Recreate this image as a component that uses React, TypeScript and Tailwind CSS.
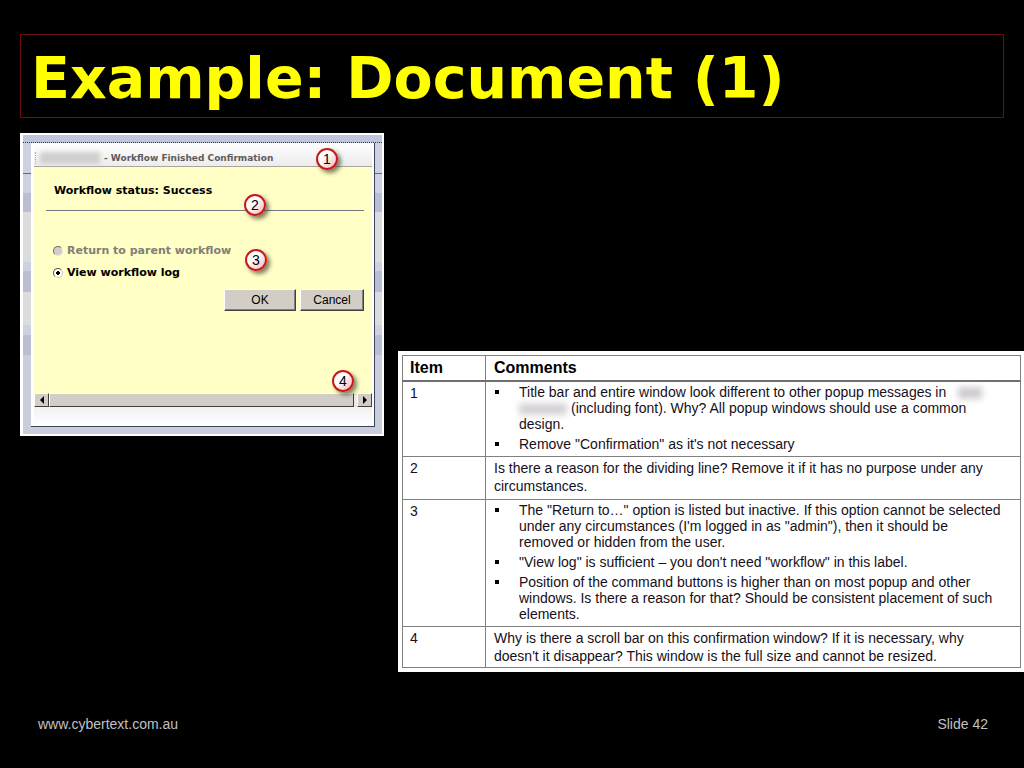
import type { ReactNode } from "react";

function Badge({ n, className }: { n: number; className: string }) {
  return (
    <span
      className={`absolute flex h-[22px] w-[22px] items-center justify-center rounded-full border-2 border-[#c8181c] bg-linear-to-br from-white from-40% to-[#f3b4b4] text-[14px] leading-none text-black shadow-[3px_3px_4px_rgba(60,60,40,0.65)] ${className}`}
    >
      {n}
    </span>
  );
}

function DialogButton({ children, className }: { children: ReactNode; className: string }) {
  return (
    <button
      type="button"
      className={`h-[22px] border border-t-white border-l-white border-r-[#404040] border-b-[#404040] bg-[#d2cec6] text-[12px] leading-4 text-black shadow-[inset_-1px_-1px_0_#808080] ${className}`}
    >
      {children}
    </button>
  );
}

function ScrollArrow({ label, points }: { label: string; points: string }) {
  return (
    <button
      type="button"
      aria-label={label}
      className="flex h-[14px] w-[15px] items-center justify-center border border-t-white border-l-white border-r-[#404040] border-b-[#404040] bg-[#d2cec6]"
    >
      <svg width="8" height="8" viewBox="0 0 8 8">
        <polygon points={points} fill="#000" />
      </svg>
    </button>
  );
}

function WorkflowDialog() {
  return (
    <div className="relative w-[364px] shrink-0 border-2 border-l-[3px] border-white bg-[#c6cadb] font-['Liberation_Sans',Arial,sans-serif]">
      <div className="h-[7px] bg-[#bec6dc]" />
      <div className="border-t border-dotted border-[#26345c]" />
      <div className="bg-[linear-gradient(#cdd1e2_0_30px,#5b6a9c_30px_31px,#cdd1e2_31px_50px,#b9bed3_50px_69px,#dcdcdf_69px_119px,#cdd1e2_119px_128px,#b9bed3_128px_149px,#dcdcdf_149px_182px,#cdd1e2_182px_192px,#b9bed3_192px_212px,#c9cddc_212px)] pr-[7px] pb-[7px] pl-2">
        <div className="border-r border-b border-[#3c4258] bg-white pr-[2px] pl-[3px]">
          <div className="flex h-6 items-center border-b border-[#aaa89c] bg-linear-to-b from-white to-[#ececec] pt-[6px] font-['DejaVu_Sans',Verdana,sans-serif] text-[9px] leading-3 font-bold text-[#5c5c5c]">
            <span className="ml-px h-3 border-l border-dotted border-[#aaa]" />
            <span className="mr-1 ml-1 h-3 w-[60px] bg-[#cfcfcf] blur-[2px]" />
            <span>- Workflow Finished Confirmation</span>
          </div>
          <div className="h-[226px] bg-[#ffffc6] pr-2 pl-3 font-['DejaVu_Sans',Verdana,sans-serif] text-[11px] leading-4 font-bold">
            <p className="pt-4 pl-2 text-black">Workflow status: Success</p>
            <hr className="mt-[11px] border-[#77777f]" />
            <div className="mt-8 flex items-center gap-1 pl-[7px] text-[#808074]">
              <input
                type="radio"
                id="parent"
                name="next"
                disabled
                className="h-[10px] w-[10px] appearance-none rounded-full border border-t-[#707070] border-r-[#e8e8e0] border-b-[#e8e8e0] border-l-[#707070] bg-[#d2cec6]"
              />
              <label htmlFor="parent">Return to parent workflow</label>
            </div>
            <div className="mt-[6px] flex items-center gap-1 pl-[7px] text-black">
              <input
                type="radio"
                id="log"
                name="next"
                defaultChecked
                className="h-[10px] w-[10px] appearance-none rounded-full border border-t-[#505050] border-r-[#c8c8c0] border-b-[#c8c8c0] border-l-[#505050] bg-[radial-gradient(circle,#000_0_2px,#fff_2px)]"
              />
              <label htmlFor="log">View workflow log</label>
            </div>
            <div className="mt-2 flex justify-end gap-1 font-['Liberation_Sans',Arial,sans-serif] font-normal">
              <DialogButton className="w-[72px]">OK</DialogButton>
              <DialogButton className="w-16">Cancel</DialogButton>
            </div>
          </div>
          <div className="flex h-[14px] bg-[#ebe9e4]">
            <ScrollArrow label="Scroll left" points="6,0 6,8 2,4" />
            <div className="mr-[3px] flex-1 border border-t-white border-l-white border-r-[#404040] border-b-[#404040] bg-[#d2cec6]" />
            <ScrollArrow label="Scroll right" points="2,0 2,8 6,4" />
          </div>
          <div className="h-[19px] bg-linear-to-b from-[#f2f2f2] to-white" />
        </div>
      </div>

      <Badge n={1} className="top-[13px] left-[293px]" />
      <Badge n={2} className="top-[59px] left-[221px]" />
      <Badge n={3} className="top-[114px] left-[222px]" />
      <Badge n={4} className="top-[235px] left-[309px]" />
    </div>
  );
}

function Row({ item, children }: { item: number; children: ReactNode }) {
  return (
    <tr className="group border-b border-[#808080] align-top">
      <td className="border-r border-[#808080] pt-[2px] pl-[7px] leading-[18px]">{item}</td>
      <td className="pt-[2px] pb-1 pl-2 group-last:pb-[2px]">{children}</td>
    </tr>
  );
}

function Bullet({ children }: { children: ReactNode }) {
  return (
    <li className="flex leading-4">
      <span className="mt-[6px] mr-5 ml-px h-1 w-1 shrink-0 bg-black" />
      <span>{children}</span>
    </li>
  );
}

function CommentsTable() {
  return (
    <div className="mt-[218px] flex-1 bg-white p-1 pr-[3px] font-['Liberation_Sans',Arial,sans-serif] text-[14px] whitespace-nowrap text-[#151020]">
      <table className="w-full table-fixed border-collapse border border-[#808080]">
        <thead>
          <tr className="border-b-2 border-[#707070] text-left text-[16px] leading-6 text-black">
            <th className="w-[83px] border-r border-[#808080] pl-[7px]">Item</th>
            <th className="pl-2">Comments</th>
          </tr>
        </thead>
        <tbody>
          <Row item={1}>
            <ul className="flex flex-col gap-1">
              <Bullet>
                Title bar and entire window look different to other popup messages in{" "}
                <span className="ml-2 inline-block h-3 w-6 bg-[#cfccd0] align-middle blur-[3px]" />
                <br />
                <span className="mr-1 inline-block h-3 w-12 bg-[#d6d3d7] align-middle blur-[3px]" />
                (including font). Why? All popup windows should use a common
                <br />
                design.
              </Bullet>
              <Bullet>Remove "Confirmation" as it's not necessary</Bullet>
            </ul>
          </Row>
          <Row item={2}>
            <p className="leading-[18px]">
              Is there a reason for the dividing line? Remove it if it has no purpose under any
              <br />
              circumstances.
            </p>
          </Row>
          <Row item={3}>
            <ul className="flex flex-col gap-1">
              <Bullet>
                The "Return to…" option is listed but inactive. If this option cannot be selected
                <br />
                under any circumstances (I'm logged in as "admin"), then it should be
                <br />
                removed or hidden from the user.
              </Bullet>
              <Bullet>"View log" is sufficient – you don't need "workflow" in this label.</Bullet>
              <Bullet>
                Position of the command buttons is higher than on most popup and other
                <br />
                windows. Is there a reason for that? Should be consistent placement of such
                <br />
                elements.
              </Bullet>
            </ul>
          </Row>
          <Row item={4}>
            <p className="leading-[18px]">
              Why is there a scroll bar on this confirmation window? If it is necessary, why
              <br />
              doesn't it disappear? This window is the full size and cannot be resized.
            </p>
          </Row>
        </tbody>
      </table>
    </div>
  );
}

export default function App() {
  return (
    <div className="flex min-h-screen flex-col bg-black pt-[34px]">
      <h1 className="mx-5 border border-[#6b1010] px-[10px] pt-[11px] pb-[7px] font-['DejaVu_Sans',Verdana,sans-serif] text-[57px] leading-[64px] font-bold text-[#ffff00]">
        Example: Document (1)
      </h1>
      <main className="mt-[15px] flex items-start gap-[14px] pl-5">
        <WorkflowDialog />
        <CommentsTable />
      </main>
      <footer className="mt-auto flex justify-between pr-9 pb-[34px] pl-[38px] font-['Liberation_Sans',Arial,sans-serif] text-[14px] leading-5 text-[#c0c0c0]">
        <a href="http://www.cybertext.com.au">www.cybertext.com.au</a>
        <span>Slide 42</span>
      </footer>
    </div>
  );
}
